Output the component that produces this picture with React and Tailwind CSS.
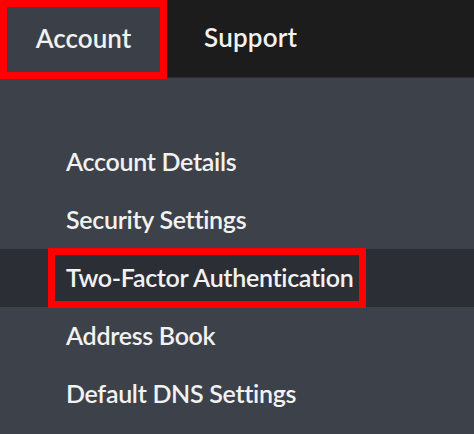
export default function App() {
  const items = [
    "Account Details",
    "Security Settings",
    "Two-Factor Authentication",
    "Address Book",
    "Default DNS Settings",
  ];
  return (
    <div
      className="w-[474px] h-[434px] overflow-hidden bg-[#3d424a] text-[#f2f2f2]"
      style={{ fontFamily: "Lato, 'Noto Sans', sans-serif" }}
    >
      <div className="flex h-[78px] bg-[#1c1c1c] border-b border-[#2a2d31]">
        <div className="flex w-[167px] h-[79px] shrink-0 items-center justify-center border-[7px] border-[#ff0000] bg-[#3b4048] pb-[3px] text-[26px] font-semibold">
          Account
        </div>
        <div className="flex items-center pl-[37px] pb-[2px] text-[26px] font-semibold tracking-[0.2px]">
          Support
        </div>
      </div>
      <div className="flex flex-col pt-[55px]">
        {items.map((t, i) =>
          i === 2 ? (
            <div key={t} className="flex h-[58px] items-center bg-[#2b2f35]">
              <div className="ml-[48px] flex h-[60px] items-center border-[7px] border-[#ff0000] pl-[11px] pr-[6px] text-[25px] font-semibold tracking-[-0.3px]">
                {t}
              </div>
            </div>
          ) : (
            <div key={t} className="flex h-[58px] items-center pl-[66px] text-[25px] font-semibold tracking-[-0.3px]">
              {t}
            </div>
          )
        )}
      </div>
    </div>
  );
}
